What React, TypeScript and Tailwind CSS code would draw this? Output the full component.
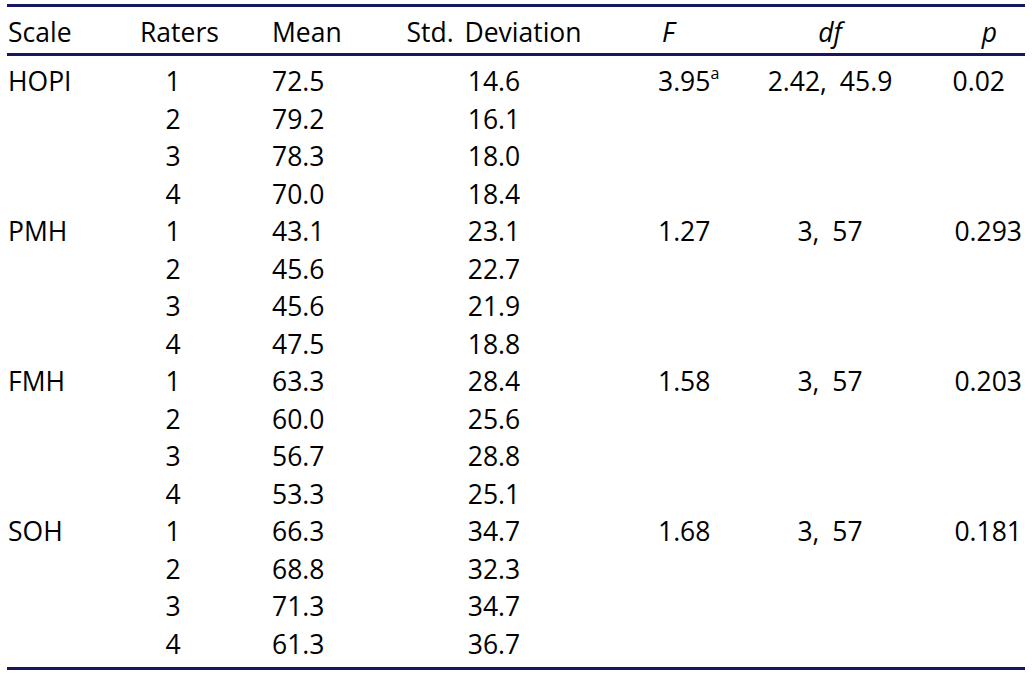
import React from 'react';

type Row = { scale?: string; rater: string; mean: string; sd: string; f?: string; sup?: string; df?: string; p?: string };

const rows: Row[] = [
  { scale: 'HOPI', rater: '1', mean: '72.5', sd: '14.6', f: '3.95', sup: 'a', df: '2.42, 45.9', p: '0.02' },
  { rater: '2', mean: '79.2', sd: '16.1' },
  { rater: '3', mean: '78.3', sd: '18.0' },
  { rater: '4', mean: '70.0', sd: '18.4' },
  { scale: 'PMH', rater: '1', mean: '43.1', sd: '23.1', f: '1.27', df: '3, 57', p: '0.293' },
  { rater: '2', mean: '45.6', sd: '22.7' },
  { rater: '3', mean: '45.6', sd: '21.9' },
  { rater: '4', mean: '47.5', sd: '18.8' },
  { scale: 'FMH', rater: '1', mean: '63.3', sd: '28.4', f: '1.58', df: '3, 57', p: '0.203' },
  { rater: '2', mean: '60.0', sd: '25.6' },
  { rater: '3', mean: '56.7', sd: '28.8' },
  { rater: '4', mean: '53.3', sd: '25.1' },
  { scale: 'SOH', rater: '1', mean: '66.3', sd: '34.7', f: '1.68', df: '3, 57', p: '0.181' },
  { rater: '2', mean: '68.8', sd: '32.3' },
  { rater: '3', mean: '71.3', sd: '34.7' },
  { rater: '4', mean: '61.3', sd: '36.7' },
];

const grid = 'grid grid-cols-[133px_66px_199px_178px_157px_180px_105px]';

const App: React.FC = () => {
  return (
    <div className="min-h-[674px] bg-white pt-[4px] text-black" style={{ fontFamily: '"Open Sans", "Noto Sans", sans-serif' }}>
      <div className="ml-[7px] w-[1018px] border-t-[3px] border-b-[3px] border-[#17175f] text-[26.5px]">
        {/* header */}
        <div className={`${grid} h-[49px] items-center border-b-[3px] border-[#17175f] pt-[4px] leading-none`}>
          <div className="pl-px">Scale</div>
          <div className="text-center">Raters</div>
          <div className="pl-[66px]">Mean</div>
          <div className="text-center [word-spacing:4px]">Std. Deviation</div>
          <div className="pl-[79px] italic">F</div>
          <div className="text-center italic">df</div>
          <div className="pr-[28px] text-right italic">p</div>
        </div>

        {/* body */}
        <div className="pt-[7px] pb-[4px]">
          {rows.map((r, i) => (
            <div key={i} className={`${grid} h-[37.5px] leading-[37.5px]`}>
              <div className="pl-px">{r.scale ?? ''}</div>
              <div className="text-center">{r.rater}</div>
              <div className="pl-[66px]">{r.mean}</div>
              <div className="text-center">{r.sd}</div>
              <div className="pl-[75px]">
                {r.f}
                {r.sup && <sup className="relative -top-[2px] text-[16px] align-super leading-none">{r.sup}</sup>}
              </div>
              <div className="text-center [word-spacing:6px]">{r.df}</div>
              <div className={`text-right ${r.p === '0.02' ? 'pr-[20px]' : 'pr-[3px]'}`}>{r.p}</div>
            </div>
          ))}
        </div>
      </div>
    </div>
  );
};

export default App;
